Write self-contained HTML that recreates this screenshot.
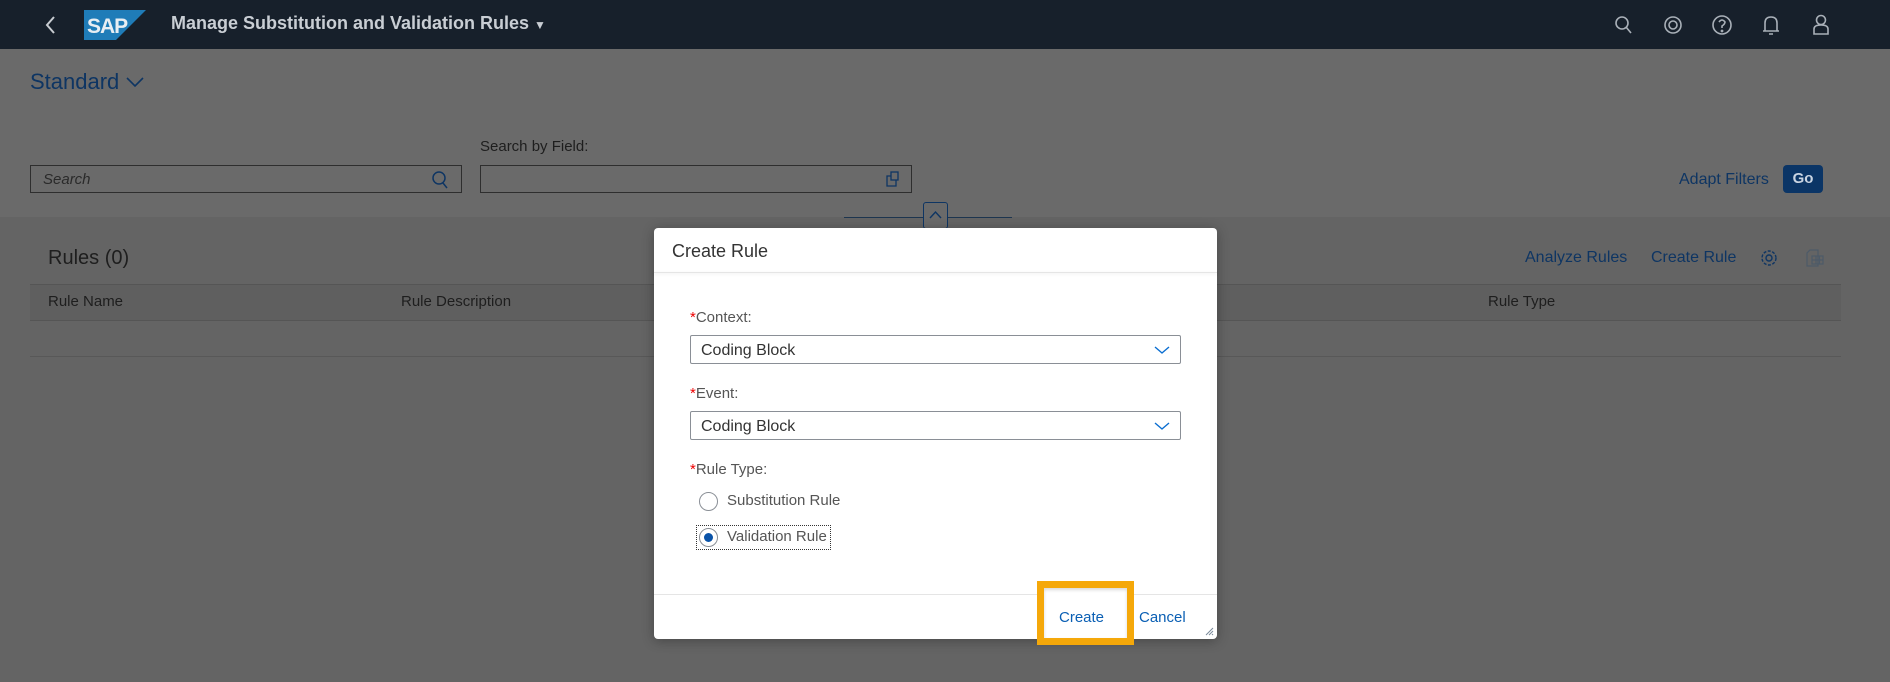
<!DOCTYPE html>
<html><head><meta charset="utf-8"><style>
*{margin:0;padding:0;box-sizing:border-box}
body{width:1890px;height:682px;overflow:hidden;font-family:"Liberation Sans",sans-serif;background:#646464;position:relative;color:#222}
.a{position:absolute;white-space:nowrap}
.hdr{left:0;top:0;width:1890px;height:49px;background:#17202b}
.top{left:0;top:49px;width:1890px;height:168px;background:#6a6a6a}
.lnk{color:#0e3563;font-size:16px}
.inp{border:1px solid #2e2e2e;height:28px;background:#6a6a6a}
.th{font-size:15px;color:#1e1e1e}
.dlg{left:654px;top:228px;width:563px;height:411px;background:#fff;border-radius:4px;box-shadow:0 2px 12px rgba(0,0,0,.3)}
.lbl{font-size:15px;color:#555}
.lbl b{color:#e00;font-weight:normal}
.sel{width:491px;height:29px;border:1px solid #8a8f96;border-radius:2px;font-size:16px;color:#333;padding:6px 10px}
</style></head><body>
<div class="a hdr"></div>
<svg class="a" style="left:44px;top:15px" width="14" height="20" viewBox="0 0 14 20"><path d="M10 2 L3 10 L10 18" stroke="#c8ccd1" stroke-width="2" fill="none"/></svg>
<svg class="a" style="left:84px;top:10px" width="62" height="30" viewBox="0 0 62 30"><polygon points="0,0 62,0 32,30 0,30" fill="#1f7cb8"/><text x="3" y="23" font-family="Liberation Sans" font-weight="bold" font-size="21" fill="#e8eef3" letter-spacing="-1">SAP</text></svg>
<div class="a" style="left:171px;top:13px;font-size:18px;font-weight:bold;color:#c9ced4">Manage Substitution and Validation Rules <span style="font-size:12px">▼</span></div>
<svg class="a" style="left:1612px;top:13px" width="230" height="24" viewBox="0 0 230 24" fill="none" stroke="#a9b0b8" stroke-width="1.6">
<circle cx="10" cy="10" r="6"/><path d="M14 14 L19 20"/>
<circle cx="61" cy="12" r="8"/><circle cx="61" cy="12" r="4"/>
<circle cx="110" cy="12" r="9"/><path d="M107 9 Q110 5 113 9 Q113 11 110 13 L110 15"/><circle cx="110" cy="18" r=".6"/>
<path d="M153 18 L153 10 Q153 4 159 4 Q165 4 165 10 L165 18 L151 18 L167 18 M157 21 L161 21"/>
<circle cx="209" cy="7" r="4.5"/><path d="M202 21 L202 16 Q202 12 209 12 Q216 12 216 16 L216 21 Z"/>
</svg>
<div class="a top"></div>
<div class="a" style="left:30px;top:69px;font-size:22px;color:#0e3563">Standard <svg width="20" height="14" viewBox="0 0 20 14"><path d="M2 3 L10 11 L18 3" stroke="#0e3563" stroke-width="1.6" fill="none"/></svg></div>
<div class="a" style="left:480px;top:138px;font-size:15px;color:#1e1e1e">Search by Field:</div>
<div class="a inp" style="left:30px;top:165px;width:432px"><span class="a" style="left:12px;top:5px;font-style:italic;font-size:15px;color:#2a2a2a">Search</span>
<svg class="a" style="left:400px;top:4px" width="18" height="20" viewBox="0 0 18 20" fill="none" stroke="#0e3563" stroke-width="1.5"><circle cx="8" cy="8" r="6"/><path d="M12 13 L16 18"/></svg></div>
<div class="a inp" style="left:480px;top:165px;width:432px"><svg class="a" style="left:404px;top:5px" width="16" height="17" viewBox="0 0 16 17" fill="none" stroke="#0e3563" stroke-width="1.3"><rect x="6" y="1" width="7" height="8"/><path d="M6 5 L2 5 L2 15 L11 15 L11 9"/></svg></div>
<div class="a lnk" style="left:1679px;top:171px">Adapt Filters</div>
<div class="a" style="left:1783px;top:165px;width:40px;height:28px;background:#0b3566;border-radius:4px;color:#c9d4e2;font-weight:bold;font-size:15px;text-align:center;line-height:28px">Go</div>
<div class="a" style="left:844px;top:217px;width:168px;height:1px;background:#1e3650"></div>
<div class="a" style="left:923px;top:202px;width:25px;height:27px;border:1px solid #0e3563;border-radius:3px;background:#6a6a6a"><svg width="23" height="25" viewBox="0 0 23 25"><path d="M6 15 L11.5 9 L17 15" stroke="#0e3563" stroke-width="1.4" fill="none"/></svg></div>
<div class="a" style="left:48px;top:247px;font-size:20px;color:#1e1e1e">Rules (0)</div>
<div class="a lnk" style="left:1525px;top:249px">Analyze Rules</div>
<div class="a lnk" style="left:1651px;top:249px">Create Rule</div>
<svg class="a" style="left:1759px;top:248px" width="20" height="20" viewBox="0 0 20 20" fill="none" stroke="#0e3563" stroke-width="1.4"><circle cx="10" cy="10" r="3"/><circle cx="10" cy="10" r="7" stroke-dasharray="3 1.5"/></svg>
<svg class="a" style="left:1805px;top:248px" width="20" height="20" viewBox="0 0 20 20" fill="none" stroke="#4d5a68" stroke-width="1.2"><path d="M5 2 L13 2 L13 18 L2 18 L2 5 Z"/><rect x="7" y="8" width="11" height="8"/><path d="M7 12 L18 12 M11 8 L11 16 M14.5 8 L14.5 16"/></svg>
<div class="a" style="left:30px;top:284px;width:1811px;height:37px;background:#5f5f5f;border-top:1px solid #555;border-bottom:1px solid #555"></div>
<div class="a" style="left:30px;top:356px;width:1811px;height:1px;background:#585858"></div>
<div class="a th" style="left:48px;top:293px">Rule Name</div>
<div class="a th" style="left:401px;top:293px">Rule Description</div>
<div class="a th" style="left:1488px;top:293px">Rule Type</div>

<div class="a dlg">
<div class="a" style="left:18px;top:13px;font-size:18px;color:#333">Create Rule</div>
<div class="a" style="left:0;top:44px;width:563px;height:1px;background:#e5e5e5;box-shadow:0 1px 3px rgba(0,0,0,.12)"></div>
<div class="a lbl" style="left:36px;top:81px"><b>*</b>Context:</div>
<div class="a sel" style="left:36px;top:107px">Coding Block<svg class="a" style="left:463px;top:9px" width="16" height="10" viewBox="0 0 16 10"><path d="M1 2 L8 8 L15 2" stroke="#0a6ed1" stroke-width="1.4" fill="none"/></svg></div>
<div class="a lbl" style="left:36px;top:157px"><b>*</b>Event:</div>
<div class="a sel" style="left:36px;top:183px">Coding Block<svg class="a" style="left:463px;top:9px" width="16" height="10" viewBox="0 0 16 10"><path d="M1 2 L8 8 L15 2" stroke="#0a6ed1" stroke-width="1.4" fill="none"/></svg></div>
<div class="a lbl" style="left:36px;top:233px"><b>*</b>Rule Type:</div>
<div class="a" style="left:45px;top:264px;width:19px;height:19px;border:1px solid #8a8f96;border-radius:50%"></div>
<div class="a" style="left:73px;top:264px;font-size:15px;color:#555">Substitution Rule</div>
<div class="a" style="left:42px;top:297px;width:135px;height:25px;border:1px dotted #333"></div>
<div class="a" style="left:45px;top:300px;width:19px;height:19px;border:1px solid #8a8f96;border-radius:50%"><div class="a" style="left:4px;top:4px;width:9px;height:9px;border-radius:50%;background:#0a53a8"></div></div>
<div class="a" style="left:73px;top:300px;font-size:15px;color:#555">Validation Rule</div>
<div class="a" style="left:0;top:366px;width:563px;height:1px;background:#e5e5e5"></div>
<div class="a" style="left:485px;top:381px;font-size:15px;color:#0a5fb4">Cancel</div>
<svg class="a" style="left:550px;top:398px" width="10" height="10" viewBox="0 0 10 10"><path d="M9 2 L2 9 M9 5 L5 9 M9 8 L8 9" stroke="#7a8a9a" stroke-width="1"/></svg>
</div>
<div class="a" style="left:1037px;top:581px;width:97px;height:64px;border:7px solid #f5a80a;background:#fff;box-shadow:inset 0 2px 3px rgba(0,0,0,.15)"></div>
<div class="a" style="left:1059px;top:609px;font-size:15px;color:#0a5fb4">Create</div>
</body></html>
